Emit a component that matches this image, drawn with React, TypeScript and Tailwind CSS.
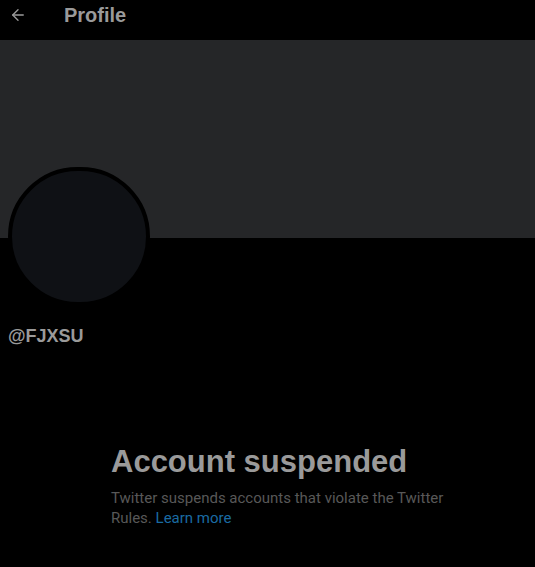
import { ArrowLeft } from 'lucide-react';

export default function App() {
  return (
    <div
      className="w-[535px] h-[567px] bg-black overflow-hidden"
      style={{ fontFamily: '"Liberation Sans", Arial, sans-serif' }}
    >
      {/* Header */}
      <div className="h-10 flex items-start pt-[3px]">
        <div className="w-[64px] pl-[9px] pt-[3px] flex items-center">
          <ArrowLeft className="w-[18px] h-[18px] text-[#9a9a9a]" strokeWidth={1.8} />
        </div>
        <h1 className="text-[20px] leading-6 font-bold text-[#9a9a9a]">Profile</h1>
      </div>

      {/* Banner */}
      <div className="h-[198px] bg-[#252628]" />

      {/* Avatar + handle */}
      <div className="px-2">
        <div className="w-[142px] h-[139px] -mt-[71px] rounded-full bg-[#0f1115] border-[4px] border-black" />
        <div className="mt-[20px] text-[18px] font-bold text-[#9a9a9a] leading-5">@FJXSU</div>
      </div>

      {/* Suspended message */}
      <div className="pl-[111px] pt-[98px] w-[460px]">
        <h2 className="text-[31px] font-bold text-[#9a9a9a] leading-9">Account suspended</h2>
        <p
          className="mt-[8px] text-[15px] leading-5 text-[#585858]"
          style={{ fontFamily: 'Roboto, "Liberation Sans", sans-serif' }}
        >
          Twitter suspends accounts that violate the Twitter Rules.{' '}
          <a className="text-[#1a6ba3]">Learn more</a>
        </p>
      </div>
    </div>
  );
}
